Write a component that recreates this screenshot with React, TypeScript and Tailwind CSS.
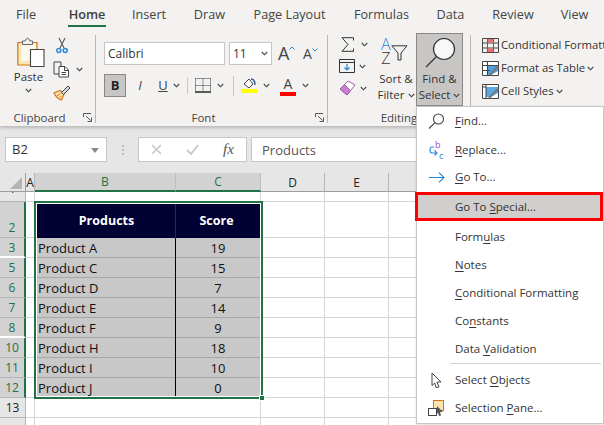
import type { ReactNode } from "react";

const chevron = (
  <svg className="shrink-0" width="7" height="5" viewBox="0 0 7 5" fill="none" stroke="#444" strokeWidth="1.1">
    <path d="M0.8 1 L3.5 3.8 L6.2 1" />
  </svg>
);

function Launcher() {
  return (
    <svg width="9" height="9" viewBox="0 0 9 9" fill="none" stroke="#555" strokeWidth="1">
      <path d="M0.5 4 V0.5 H8 M3 3 L7.5 7.5 M4.5 8.5 H8.5 V4.5" />
    </svg>
  );
}

function GroupSep() {
  return <div className="w-px h-[88px] bg-[#b8b6b4] self-start mt-[1px] shrink-0" />;
}

function PasteIcon() {
  return (
    <svg width="28" height="32" viewBox="0 0 28 32">
      <path d="M0.8 6.5 H20 V29 H0.8 Z" fill="#fde6b4" stroke="#d9730d" strokeWidth="1.2" />
      <path d="M4 7.5 H19 V25 H4 Z" fill="#fdf8ec" />
      <path d="M5.5 8.5 V5 H8 Q10.5 -0.5 13 5 H15.5 V8.5 Z" fill="#f3f2f1" stroke="#666" strokeWidth="1" />
      <path d="M13.5 13.5 H27 V30.5 H13.5 Z" fill="#fff" stroke="#444" strokeWidth="1.1" />
    </svg>
  );
}

function CutIcon() {
  return (
    <svg width="12" height="17" viewBox="0 0 12 17" fill="none">
      <path d="M3 1 L8 11 M9 1 L4 11" stroke="#555" strokeWidth="1.1" />
      <circle cx="2.8" cy="13.5" r="2" stroke="#2b88d8" strokeWidth="1.5" />
      <circle cx="9.2" cy="13.5" r="2" stroke="#2b88d8" strokeWidth="1.5" />
    </svg>
  );
}

function CopyIcon() {
  return (
    <svg width="17" height="17" viewBox="0 0 17 17" fill="none" stroke="#444" strokeWidth="1">
      <path d="M6 13 H1 V1 H8 V5" />
      <path d="M6 5.5 H12 L15.5 9 V16 H6 Z M11.5 5.5 V9.5 H15.5" fill="#fff" />
      <path d="M8.5 11.5 H13 M8.5 13.5 H13" />
    </svg>
  );
}

function PainterIcon() {
  return (
    <svg width="18" height="16" viewBox="0 0 18 16" fill="none">
      <path d="M1 8 L7 5.5 L11 9.5 L8.5 15 Q4 14 1 8 Z" fill="#fde6b4" stroke="#d9730d" strokeWidth="1.2" />
      <path d="M4 11 L7.5 8.5 M6 13.5 L9 10.5" stroke="#d9730d" strokeWidth="1" />
      <path d="M8.5 7.5 L15 1 L17 3 L10.5 9.5 Z" fill="#d8d8d8" stroke="#444" strokeWidth="1" />
    </svg>
  );
}

function BordersIcon() {
  return (
    <svg width="16" height="15" viewBox="0 0 16 15" fill="none" stroke="#333" strokeWidth="1">
      <path d="M0.5 0.5 H15.5 M0.5 7.5 H15.5 M0.5 0.5 V13 M15.5 0.5 V13 M8 0.5 V13" strokeDasharray="1 1" />
      <path d="M0 14 H16" strokeWidth="1.6" />
    </svg>
  );
}

function FillIcon() {
  return (
    <svg width="16" height="15" viewBox="0 0 16 15">
      <path d="M3 6 L8 1 L12 6 L8 10 Z" fill="#fff" stroke="#444" strokeWidth="1" />
      <path d="M10 1 Q14 1 14 7" fill="none" stroke="#2b579a" strokeWidth="1.3" />
      <rect x="0" y="11" width="16" height="4" fill="#ffff00" />
    </svg>
  );
}

function SigmaIcon() {
  return (
    <svg width="13" height="15" viewBox="0 0 13 15" fill="none" stroke="#333" strokeWidth="1">
      <path d="M12.5 3.5 V0.7 H1 L7 7.5 L1 14.3 H12.5 V11.5" />
    </svg>
  );
}

function FillDownIcon() {
  return (
    <svg width="16" height="14" viewBox="0 0 16 14" fill="none">
      <path d="M0.5 0.5 H15.5 V13.5 H0.5 Z M0.5 3.5 H15.5" stroke="#333" />
      <path d="M8 5 V11 M5.5 8.5 L8 11 L10.5 8.5" stroke="#1e88d8" strokeWidth="1.2" />
    </svg>
  );
}

function EraserIcon() {
  return (
    <svg width="17" height="16" viewBox="0 0 17 16">
      <path d="M1 9 L9 1 L16 5 L8 15 Z" fill="#fff" stroke="#a65bb0" strokeWidth="1" />
      <path d="M1 9 L5.5 4.5 L11.5 10.5 L8 15 Z" fill="#c77fd0" stroke="#a65bb0" strokeWidth="1" />
    </svg>
  );
}

function FunnelIcon() {
  return (
    <svg width="17" height="16" viewBox="0 0 17 16" fill="none" stroke="#333" strokeWidth="1">
      <path d="M0.8 0.8 H16 L10 8 V15 H7 V8 Z" />
    </svg>
  );
}

function CondFormatIcon() {
  return (
    <svg className="shrink-0" width="17" height="15" viewBox="0 0 17 15">
      <path d="M0.5 0.5 H16.5 V14.5 H0.5 Z M0.5 5 H16.5 M0.5 10 H16.5 M5.5 0.5 V14.5 M11.5 0.5 V14.5" fill="none" stroke="#444" />
      <path d="M6 1 H11 V4.5 H6 Z M6 10.5 H11 V14 H6 Z" fill="#ef6f6f" />
      <path d="M5.5 0.5 V14.5 M11.5 0.5 V14.5" stroke="#d13438" fill="none" />
    </svg>
  );
}

function TableStyleIcon() {
  return (
    <svg className="shrink-0" width="17" height="15" viewBox="0 0 17 15">
      <path d="M0.5 0.5 H16.5 V14.5 H0.5 Z" fill="#fff" />
      <path d="M6 5 H16 V10 L9 14 H6 Z" fill="#4ea1e0" />
      <path d="M0.5 0.5 H16.5 V14.5 H0.5 Z M0.5 4.5 H16.5 M0.5 9.5 H8 M5.5 0.5 V14.5" fill="none" stroke="#444" />
      <path d="M8 14 L16 5" stroke="#777" strokeWidth="2" fill="none" />
    </svg>
  );
}

function CellStylesIcon() {
  return (
    <svg className="shrink-0" width="17" height="15" viewBox="0 0 17 15">
      <path d="M0.5 0.5 H16.5 V14.5 H0.5 Z" fill="#fff" />
      <path d="M4 3 H16 V9 L9 13 H4 Z" fill="#5aa9e6" />
      <path d="M0.5 0.5 H16.5 V14.5 H0.5 Z M0.5 3 H4 M4 0.5 V14.5" fill="none" stroke="#444" />
      <path d="M7 14 L16 5" stroke="#777" strokeWidth="2" fill="none" />
    </svg>
  );
}

function SmallMagnifier() {
  return (
    <svg width="17" height="17" viewBox="0 0 17 17" fill="none" stroke="#444" strokeWidth="1.1">
      <circle cx="10.5" cy="6" r="5" />
      <path d="M6.8 9.8 L1 15.5" />
    </svg>
  );
}

function ReplaceIcon() {
  return (
    <svg width="16" height="19" viewBox="0 0 16 19" fill="none">
      <path d="M5 6 H3 Q1 6 1 9 Q1 12 3 12 H8 M5.5 9.5 L8 12 L5.5 14.5" stroke="#2b88d8" strokeWidth="1.1" />
      <text x="6" y="7" fontSize="9" fill="#a349c4" fontFamily="'Open Sans', sans-serif">b</text>
      <text x="10" y="18" fontSize="9" fill="#2b88d8" fontFamily="'Open Sans', sans-serif">c</text>
    </svg>
  );
}

function ArrowIcon() {
  return (
    <svg width="16" height="11" viewBox="0 0 16 11" fill="none" stroke="#1e88d8" strokeWidth="1.1">
      <path d="M0 5.5 H15 M10 0.7 L15 5.5 L10 10.3" />
    </svg>
  );
}

function SelectObjectsIcon() {
  return (
    <svg width="11" height="16" viewBox="0 0 11 16" fill="#fff" stroke="#444" strokeWidth="1">
      <path d="M1 1 L10 10 H6 L8 15 L5 15.5 L3.8 11 L1 13.5 Z" />
    </svg>
  );
}

function SelectionPaneIcon() {
  return (
    <svg width="17" height="16" viewBox="0 0 17 16">
      <rect x="5.5" y="0.5" width="10" height="10" fill="#fbe4b0" stroke="#d9730d" />
      <rect x="0.5" y="8.5" width="8" height="7" fill="#fff" stroke="#444" />
      <path d="M9 6 L15 12 H12 L13 15.5 L11 16 L10 12.5 L9 14 Z" fill="#555" />
    </svg>
  );
}

function Tab({ label, width, active }: { label: string; width: string; active?: boolean }) {
  return (
    <div className={`${width} shrink-0 h-[27px] pt-[2px] flex items-center justify-center relative whitespace-nowrap`}>
      <span className={active ? "text-[#3f3f3f] font-semibold" : "text-[#444]"}>{label}</span>
      {active && <div className="absolute bottom-0 left-0 right-0 h-[2px] bg-[#217346]" />}
    </div>
  );
}

function GroupLabel({ label, launcher }: { label: string; launcher?: boolean }) {
  return (
    <div className={`mt-auto h-[18px] pt-[1px] relative flex items-center justify-center text-[11.5px] text-[#444] ${launcher ? "pr-[16px]" : ""}`}>
      {label}
      {launcher && <div className="absolute right-[3px] top-[5px]"><Launcher /></div>}
    </div>
  );
}

function ClipboardGroup() {
  return (
    <div className="w-[95px] shrink-0 h-full flex flex-col">
      <div className="flex h-[74px]">
        <div className="w-[50px] pl-[7px] flex flex-col items-center">
          <div className="mt-[2px] ml-[5px]"><PasteIcon /></div>
          <div className="mt-[1px] leading-[16px]">Paste</div>
          <div className="mt-[3px]">{chevron}</div>
        </div>
        <div className="flex flex-col pl-[3px] gap-[7px] pt-[3px]">
          <div className="pl-[3px]"><CutIcon /></div>
          <div className="flex items-center gap-[6px]"><CopyIcon />{chevron}</div>
          <PainterIcon />
        </div>
      </div>
      <GroupLabel label="Clipboard" launcher />
    </div>
  );
}

function FontGroup() {
  return (
    <div className="w-[231px] shrink-0 h-full flex flex-col">
      <div className="pl-[8px] pt-[8px]">
        <div className="flex items-center">
          <div className="w-[121px] h-[23px] bg-white border border-[#c8c6c4] pl-[3px] text-[12px] leading-[21px]">Calibri</div>
          <div className="ml-[4px] w-[43px] h-[23px] bg-white border border-[#c8c6c4] pl-[3px] flex items-center justify-between pr-[3px] text-[12px]">11 {chevron}</div>
          <div className="ml-[6px] text-[18px] leading-[23px] text-[#444] w-[25px] flex items-start">
            A
            <svg className="mt-[4px]" width="6" height="4" viewBox="0 0 6 4" fill="none" stroke="#2b88d8"><path d="M0.5 3.5 L3 1 L5.5 3.5" /></svg>
          </div>
          <div className="text-[14px] leading-[23px] text-[#444] w-[15px] flex items-start">
            A
            <svg className="mt-[6px]" width="6" height="4" viewBox="0 0 6 4" fill="none" stroke="#2b88d8"><path d="M0.5 0.5 L3 3 L5.5 0.5" /></svg>
          </div>
        </div>
        <div className="flex items-center mt-[9px] h-[23px]">
          <div className="w-[22px] h-[23px] bg-[#c8c6c4] border border-[#8a8886] flex items-center justify-center font-bold text-[13px] text-[#222]">B</div>
          <div className="w-[26px] text-center italic text-[13px] text-[#444] ml-[1px]">I</div>
          <div className="w-[20px] text-center underline text-[13px] text-[#444]">U</div>
          <div className="w-[14px]">{chevron}</div>
          <div className="w-px h-[16px] bg-[#c8c6c4] mr-[7px]" />
          <BordersIcon />
          <div className="ml-[6px] w-[16px]">{chevron}</div>
          <div className="w-px h-[20px] bg-[#c8c6c4] mr-[7px]" />
          <FillIcon />
          <div className="ml-[6px] w-[17px]">{chevron}</div>
          <div className="w-[16px] h-[22px] flex flex-col items-center mr-[6px]">
            <span className="text-[14px] leading-[17px] text-[#444]">A</span>
            <div className="w-[16px] h-[4px] bg-[#ff0000]" />
          </div>
          {chevron}
        </div>
      </div>
      <GroupLabel label="Font" launcher />
    </div>
  );
}

function EditingGroup() {
  return (
    <div className="w-[142px] shrink-0 h-full flex flex-col">
      <div className="flex h-[74px] pl-[11px]">
        <div className="w-[37px] flex flex-col pt-[3px] gap-[7px]">
          <div className="flex items-center gap-[7px] pl-[2px]"><SigmaIcon />{chevron}</div>
          <div className="flex items-center gap-[4px]"><FillDownIcon />{chevron}</div>
          <div className="flex items-center gap-[4px]"><EraserIcon />{chevron}</div>
        </div>
        <div className="w-[40px] flex flex-col items-center text-center leading-[16px]">
          <div className="h-[37px] w-full flex items-start pl-[5px]">
            <div className="flex flex-col text-[16px] leading-[14px] font-light mt-[3px]">
              <span className="text-[#2b88d8]">A</span>
              <span>Z</span>
            </div>
            <div className="mt-[11px]"><FunnelIcon /></div>
          </div>
          <div>Sort &amp;</div>
          <div className="flex items-center gap-[3px]">Filter {chevron}</div>
        </div>
        <div className="w-[47px] h-[73px] -mt-[1px] bg-[#c8c6c4] border border-[#8a8886] flex flex-col items-center leading-[16px]">
          <svg className="mt-[4px]" width="32" height="30" viewBox="0 0 32 30" fill="none" stroke="#333" strokeWidth="1.2">
            <circle cx="20" cy="11" r="10.5" fill="#f7f9f8" />
            <path d="M12.5 18.5 L2 29" />
          </svg>
          <div className="mt-[3px]">Find &amp;</div>
          <div className="flex items-center gap-[3px]">Select {chevron}</div>
        </div>
      </div>
      <GroupLabel label="Editing" />
    </div>
  );
}

function StylesGroup() {
  const items = [
    { label: "Conditional Formatting", icon: <CondFormatIcon />, chev: false },
    { label: "Format as Table", icon: <TableStyleIcon />, chev: true },
    { label: "Cell Styles", icon: <CellStylesIcon />, chev: true },
  ];
  return (
    <div className="flex-1 pl-[11px] pt-[1px] flex flex-col gap-[3px] overflow-hidden text-[11.3px]">
      {items.map((it) => (
        <div key={it.label} className="h-[20px] flex items-center gap-[2px] whitespace-nowrap">
          {it.icon}
          <span>{it.label}</span>
          {it.chev && chevron}
        </div>
      ))}
    </div>
  );
}

const underline = "underline underline-offset-2 decoration-[#333]";

function MenuItem({ icon, children }: { icon?: ReactNode; children: ReactNode }) {
  return (
    <div className="h-[28px] flex items-center">
      <div className="w-[38px] flex justify-center shrink-0 pl-[2px] pr-[1px]">{icon}</div>
      <span>{children}</span>
    </div>
  );
}

function FindMenu() {
  return (
    <div className="absolute z-20 left-[416px] top-[106px] w-[188px] h-[318px] bg-white border border-[#c8c6c4] text-[#333] text-[11.5px] shadow-sm">
      <MenuItem icon={<SmallMagnifier />}><u className={underline}>F</u>ind...</MenuItem>
      <div className="pt-[1px]">
        <MenuItem icon={<ReplaceIcon />}><u className={underline}>R</u>eplace...</MenuItem>
      </div>
      <div className="-mt-[1px]">
        <MenuItem icon={<ArrowIcon />}><u className={underline}>G</u>o To...</MenuItem>
      </div>
      <div className="mt-[1px] -ml-[2px] h-[29px] border-[3px] border-[#ff0000] bg-[#d0cfce] flex items-center pl-[37px]">
        <span>Go To <u className={underline}>S</u>pecial...</span>
      </div>
      <div className="mt-[2px]">
        <MenuItem>Form<u className={underline}>u</u>las</MenuItem>
        <MenuItem><u className={underline}>N</u>otes</MenuItem>
        <MenuItem><u className={underline}>C</u>onditional Formatting</MenuItem>
        <MenuItem>Co<u className={underline}>n</u>stants</MenuItem>
        <MenuItem>Data <u className={underline}>V</u>alidation</MenuItem>
      </div>
      <div className="ml-[33px] mr-[2px] h-px bg-[#d4d4d4]" />
      <div className="mt-[2px]">
        <MenuItem icon={<SelectObjectsIcon />}>Select <u className={underline}>O</u>bjects</MenuItem>
        <MenuItem icon={<SelectionPaneIcon />}>Selection <u className={underline}>P</u>ane...</MenuItem>
      </div>
    </div>
  );
}

function FormulaBar() {
  return (
    <div className="h-[47px] bg-[#e6e6e6] flex items-start pt-[11px] pl-[5px] shrink-0">
      <div className="w-[102px] h-[25px] pt-[1px] bg-white border border-[#c8c6c4] flex items-center justify-between pl-[6px] pr-[7px] text-[13px] text-[#333]">
        B2
        <svg width="8" height="5" viewBox="0 0 8 5" fill="#888"><path d="M0 0 H8 L4 5 Z" /></svg>
      </div>
      <div className="w-[31px] h-[25px] flex flex-col items-center justify-center gap-[2px]">
        <div className="w-[2px] h-[2px] bg-[#bbb]" />
        <div className="w-[2px] h-[2px] bg-[#bbb]" />
        <div className="w-[2px] h-[2px] bg-[#bbb]" />
      </div>
      <div className="w-[109px] h-[25px] bg-white border border-[#c8c6c4] flex items-center text-[#bdbdbd]">
        <svg className="ml-[12px]" width="11" height="11" viewBox="0 0 11 11" fill="none" stroke="#c8c8c8" strokeWidth="1.6">
          <path d="M1 1 L10 10 M10 1 L1 10" />
        </svg>
        <svg className="ml-[24px]" width="13" height="11" viewBox="0 0 13 11" fill="none" stroke="#c8c8c8" strokeWidth="1.8">
          <path d="M1 6 L5 10 L12 1" />
        </svg>
        <span className="ml-[24px] text-[#555] italic text-[15px] font-['Liberation_Serif',serif]">fx</span>
      </div>
      <div className="ml-[4px] flex-1 h-[25px] pt-[2px] bg-white border border-[#c8c6c4] flex items-center pl-[10px] text-[#555] text-[13px]">Products</div>
    </div>
  );
}

function ColHead({ label, width, hot }: { label: string; width: string; hot?: boolean }) {
  return (
    <div className={`${width} shrink-0 h-full pt-[1px] flex items-center justify-center border-r ${hot ? "bg-[#d2d2d2] text-[#217346] border-[#bdbdbd] border-b-2 border-b-[#217346]" : "bg-[#e6e6e6] text-[#222] border-[#b4b4b4] border-b border-b-[#9e9e9e]"}`}>
      {label}
    </div>
  );
}

function ColumnHeaders() {
  return (
    <div className="h-[19px] flex shrink-0 text-[12px]">
      <div className="w-[26px] shrink-0 h-full bg-[#e6e6e6] border-r border-b border-[#9e9e9e] flex items-end justify-end pr-[3px] pb-[2px]">
        <svg width="12" height="12" viewBox="0 0 12 12" fill="#b4b4b4"><path d="M12 0 V12 H0 Z" /></svg>
      </div>
      <ColHead label="A" width="w-[9px]" />
      <ColHead label="B" width="w-[141px]" hot />
      <ColHead label="C" width="w-[85px]" hot />
      <ColHead label="D" width="w-[64px]" />
      <ColHead label="E" width="w-[64px]" />
      <div className="flex-1 bg-[#e6e6e6] border-b border-[#9e9e9e]" />
    </div>
  );
}

type RowProps = {
  num: string;
  height: string;
  hot?: boolean;
  gap?: boolean;
  bottom?: boolean;
  clipped?: boolean;
  b?: string;
  c?: string | number;
  head?: boolean;
};

function SheetRow({ num, height, hot, gap, bottom, clipped, b, c, head }: RowProps) {
  const headBg = hot
    ? "bg-[#d2d2d2] text-[#217346] border-r-2 border-r-[#217346]"
    : "bg-[#e6e6e6] text-[#222] border-r border-r-[#b4b4b4]";
  const filled = b !== undefined;
  const fill = head
    ? "bg-[#000033] text-white font-bold text-[12.5px] pt-[3px]"
    : filled
      ? "bg-[#c8c8c8] text-[#111] pt-[2px]"
      : "";
  const rule = head || bottom ? "" : filled ? "border-b border-[#a6a6a6]" : "";
  const numAlign = head ? "items-end" : clipped ? "items-end pb-[3px]" : "items-center pt-[1px]";
  const cellLine = filled ? "" : "border-b border-[#d4d4d4]";
  const divider = filled ? (head ? "border-l border-l-[#2a2a55]" : "border-l border-l-black") : "";
  return (
    <div className={`${height} flex shrink-0 text-[13px]`}>
      <div className={`w-[26px] shrink-0 overflow-hidden flex justify-center ${numAlign} border-b ${gap ? "border-b-2 border-b-white" : "border-b-[#b4b4b4]"} ${headBg} text-[12px]`}>
        {num}
      </div>
      <div className="w-[9px] shrink-0 border-r border-b border-[#d4d4d4]" />
      <div className={`w-[141px] shrink-0 flex pl-[2px] ${cellLine}`}>
        <div className={`flex-1 flex items-center ${head ? "justify-center" : "pl-[1px]"} ${fill} ${rule}`}>{b}</div>
      </div>
      <div className={`w-[86px] -ml-px shrink-0 flex border-r border-[#d4d4d4] ${cellLine} ${divider}`}>
        <div className={`flex-1 flex items-center justify-center ${head ? "pr-[3px]" : ""} ${fill} ${rule}`}>{c}</div>
      </div>
      <div className="w-[64px] shrink-0 border-r border-b border-[#d4d4d4]" />
      <div className="w-[64px] shrink-0 border-r border-b border-[#d4d4d4]" />
      <div className="flex-1 border-b border-[#d4d4d4]" />
    </div>
  );
}

const products = [
  { num: "3", name: "Product A", score: 19, gap: true },
  { num: "5", name: "Product C", score: 15 },
  { num: "6", name: "Product D", score: 7 },
  { num: "7", name: "Product E", score: 14 },
  { num: "8", name: "Product F", score: 9, gap: true },
  { num: "10", name: "Product H", score: 18 },
  { num: "11", name: "Product I", score: 10 },
  { num: "12", name: "Product J", score: 0, bottom: true },
];

function Sheet() {
  return (
    <div className="flex-1 relative overflow-hidden bg-white">
      <SheetRow num="1" height="h-[10px]" clipped />
      <SheetRow num="2" height="h-[36px]" hot head b="Products" c="Score" />
      {products.map((p) => (
        <SheetRow key={p.num} num={p.num} height="h-[20px]" hot gap={p.gap} bottom={p.bottom} b={p.name} c={p.score} />
      ))}
      <SheetRow num="13" height="h-[20px]" />
      <SheetRow num="" height="h-[20px]" />
      {/* green selection frame over the cells */}
      <div className="absolute left-[34px] top-[9px] w-[229px] h-[198px] border-2 border-[#217346] pointer-events-none">
        <div className="w-full h-full border border-white" />
        <div className="absolute right-[-4px] bottom-[-4px] w-[6px] h-[6px] bg-[#217346] border border-white" />
      </div>
    </div>
  );
}

export default function App() {
  return (
    <div className="relative w-[604px] h-[425px] overflow-hidden flex flex-col bg-white font-['Open_Sans','Noto_Sans',sans-serif] text-[#333]">
      <div className="h-[30px] bg-[#f3f2f1] flex items-start pl-[8px] shrink-0 text-[12.7px]">
        <Tab label="File" width="w-[36px]" />
        <div className="w-[24px]" />
        <Tab label="Home" width="w-[38px]" active />
        <div className="w-[27px]" />
        <Tab label="Insert" width="w-[32px]" />
        <div className="w-[29px]" />
        <Tab label="Draw" width="w-[31px]" />
        <div className="w-[29px]" />
        <Tab label="Page Layout" width="w-[71px]" />
        <div className="w-[30px]" />
        <Tab label="Formulas" width="w-[53px]" />
        <div className="w-[29px]" />
        <Tab label="Data" width="w-[27px]" />
        <div className="w-[29px]" />
        <Tab label="Review" width="w-[40px]" />
        <div className="w-[28px]" />
        <Tab label="View" width="w-[27px]" />
      </div>
      <div className="h-[96px] bg-[#f3f2f1] flex items-start pt-[4px] shrink-0 text-[11.5px] shadow-[0_2px_3px_rgba(0,0,0,0.2)] relative z-10">
        <ClipboardGroup />
        <GroupSep />
        <FontGroup />
        <GroupSep />
        <EditingGroup />
        <GroupSep />
        <StylesGroup />
      </div>
      <FormulaBar />
      <ColumnHeaders />
      <Sheet />
      <FindMenu />
    </div>
  );
}
